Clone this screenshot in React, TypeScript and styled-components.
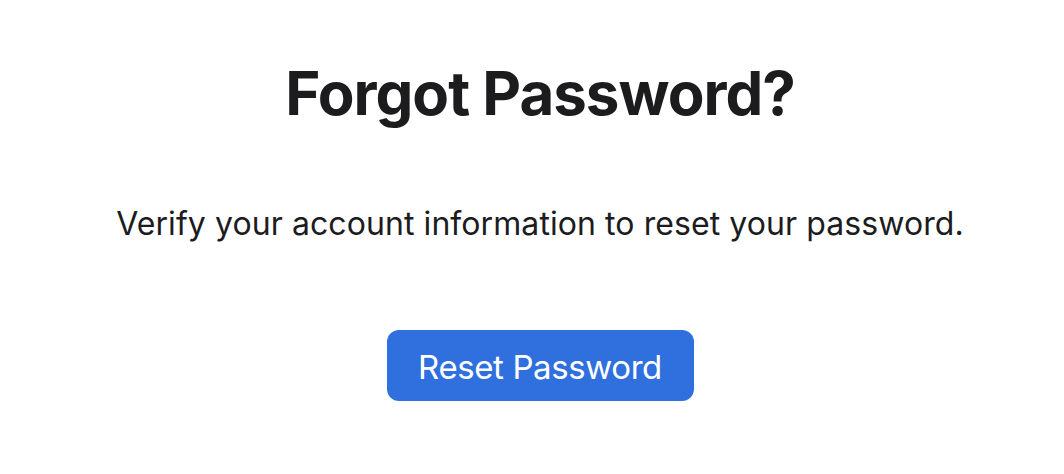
import React from "react";
import styled, { createGlobalStyle } from "styled-components";

const Global = createGlobalStyle`
  html, body { margin: 0; padding: 0; background: #ffffff; }
  body { font-family: Inter, "Noto Sans", sans-serif; -webkit-font-smoothing: antialiased; }
`;

const Page = styled.main`
  width: 1064px;
  height: 474px;
  display: flex;
  flex-direction: column;
  align-items: center;
  padding: 50px 0 0 16px;
  box-sizing: border-box;
`;

const Title = styled.h1`
  margin: 0;
  font-size: 60px;
  font-weight: 700;
  line-height: 86px;
  color: #1c1c1e;
  letter-spacing: -1px;
`;

const Subtitle = styled.p`
  margin: 68px 0 0 0;
  font-size: 32px;
  font-weight: 400;
  line-height: 40px;
  color: #1c1c1e;
  letter-spacing: 0.08px;
`;

const Button = styled.button`
  margin-top: 86px;
  width: 307px;
  height: 71px;
  padding: 3px 0 0 0;
  border: none;
  border-radius: 12px;
  background: #2f6fde;
  color: #ffffff;
  font-family: inherit;
  font-size: 33px;
  font-weight: 400;
  letter-spacing: -0.4px;
  cursor: pointer;
`;

export default function App() {
  return (
    <>
      <Global />
      <Page>
        <Title>Forgot Password?</Title>
        <Subtitle>Verify your account information to reset your password.</Subtitle>
        <Button>Reset Password</Button>
      </Page>
    </>
  );
}
